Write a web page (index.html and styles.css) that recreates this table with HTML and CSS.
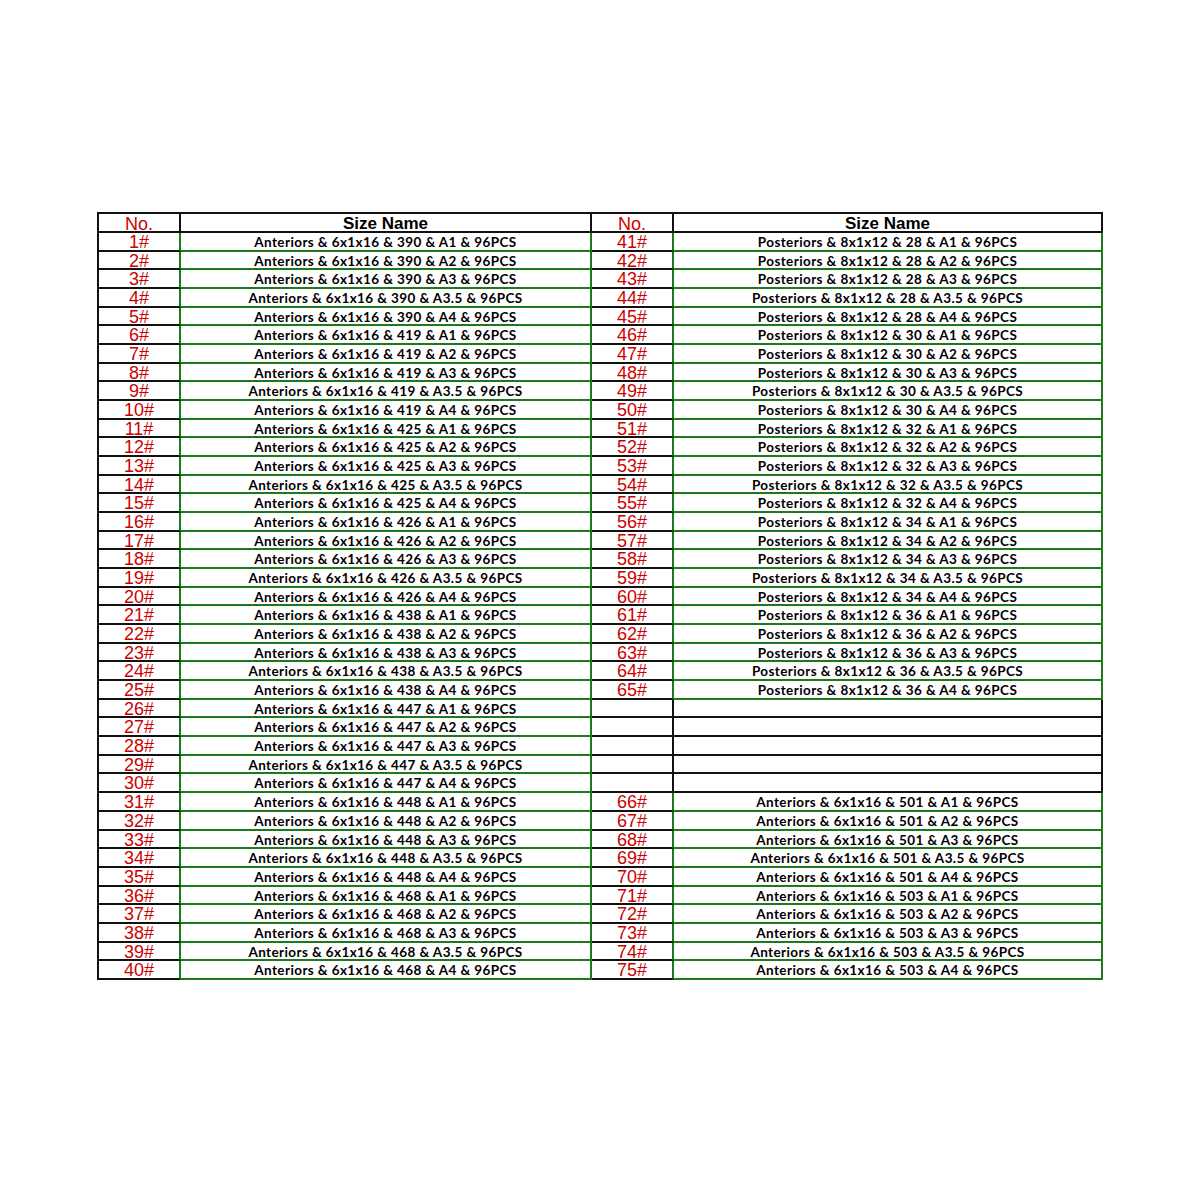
FILE: index.html
```html
<!DOCTYPE html>
<html>
<head>
<meta charset="utf-8">
<link rel="stylesheet" href="styles.css">
</head>
<body>
<div class="page">
<table class="sheet">
<colgroup><col class="c-no"><col class="c-nm1"><col class="c-no"><col class="c-nm2"></colgroup>
<thead>
<tr><th class="h-no">No.</th><th class="h-nm">Size Name</th><th class="h-no">No.</th><th class="h-nm">Size Name</th></tr>
</thead>
<tbody>
<tr><td class="no">1#</td><td class="nm">Anteriors &amp; 6x1x16 &amp; 390 &amp; A1 &amp; 96PCS</td><td class="no">41#</td><td class="nm">Posteriors &amp; 8x1x12 &amp; 28 &amp; A1 &amp; 96PCS</td></tr>
<tr><td class="no">2#</td><td class="nm">Anteriors &amp; 6x1x16 &amp; 390 &amp; A2 &amp; 96PCS</td><td class="no">42#</td><td class="nm">Posteriors &amp; 8x1x12 &amp; 28 &amp; A2 &amp; 96PCS</td></tr>
<tr><td class="no">3#</td><td class="nm">Anteriors &amp; 6x1x16 &amp; 390 &amp; A3 &amp; 96PCS</td><td class="no">43#</td><td class="nm">Posteriors &amp; 8x1x12 &amp; 28 &amp; A3 &amp; 96PCS</td></tr>
<tr><td class="no">4#</td><td class="nm">Anteriors &amp; 6x1x16 &amp; 390 &amp; A3.5 &amp; 96PCS</td><td class="no">44#</td><td class="nm">Posteriors &amp; 8x1x12 &amp; 28 &amp; A3.5 &amp; 96PCS</td></tr>
<tr><td class="no">5#</td><td class="nm">Anteriors &amp; 6x1x16 &amp; 390 &amp; A4 &amp; 96PCS</td><td class="no">45#</td><td class="nm">Posteriors &amp; 8x1x12 &amp; 28 &amp; A4 &amp; 96PCS</td></tr>
<tr><td class="no">6#</td><td class="nm">Anteriors &amp; 6x1x16 &amp; 419 &amp; A1 &amp; 96PCS</td><td class="no">46#</td><td class="nm">Posteriors &amp; 8x1x12 &amp; 30 &amp; A1 &amp; 96PCS</td></tr>
<tr><td class="no">7#</td><td class="nm">Anteriors &amp; 6x1x16 &amp; 419 &amp; A2 &amp; 96PCS</td><td class="no">47#</td><td class="nm">Posteriors &amp; 8x1x12 &amp; 30 &amp; A2 &amp; 96PCS</td></tr>
<tr><td class="no">8#</td><td class="nm">Anteriors &amp; 6x1x16 &amp; 419 &amp; A3 &amp; 96PCS</td><td class="no">48#</td><td class="nm">Posteriors &amp; 8x1x12 &amp; 30 &amp; A3 &amp; 96PCS</td></tr>
<tr><td class="no">9#</td><td class="nm">Anteriors &amp; 6x1x16 &amp; 419 &amp; A3.5 &amp; 96PCS</td><td class="no">49#</td><td class="nm">Posteriors &amp; 8x1x12 &amp; 30 &amp; A3.5 &amp; 96PCS</td></tr>
<tr><td class="no">10#</td><td class="nm">Anteriors &amp; 6x1x16 &amp; 419 &amp; A4 &amp; 96PCS</td><td class="no">50#</td><td class="nm">Posteriors &amp; 8x1x12 &amp; 30 &amp; A4 &amp; 96PCS</td></tr>
<tr><td class="no">11#</td><td class="nm">Anteriors &amp; 6x1x16 &amp; 425 &amp; A1 &amp; 96PCS</td><td class="no">51#</td><td class="nm">Posteriors &amp; 8x1x12 &amp; 32 &amp; A1 &amp; 96PCS</td></tr>
<tr><td class="no">12#</td><td class="nm">Anteriors &amp; 6x1x16 &amp; 425 &amp; A2 &amp; 96PCS</td><td class="no">52#</td><td class="nm">Posteriors &amp; 8x1x12 &amp; 32 &amp; A2 &amp; 96PCS</td></tr>
<tr><td class="no">13#</td><td class="nm">Anteriors &amp; 6x1x16 &amp; 425 &amp; A3 &amp; 96PCS</td><td class="no">53#</td><td class="nm">Posteriors &amp; 8x1x12 &amp; 32 &amp; A3 &amp; 96PCS</td></tr>
<tr><td class="no">14#</td><td class="nm">Anteriors &amp; 6x1x16 &amp; 425 &amp; A3.5 &amp; 96PCS</td><td class="no">54#</td><td class="nm">Posteriors &amp; 8x1x12 &amp; 32 &amp; A3.5 &amp; 96PCS</td></tr>
<tr><td class="no">15#</td><td class="nm">Anteriors &amp; 6x1x16 &amp; 425 &amp; A4 &amp; 96PCS</td><td class="no">55#</td><td class="nm">Posteriors &amp; 8x1x12 &amp; 32 &amp; A4 &amp; 96PCS</td></tr>
<tr><td class="no">16#</td><td class="nm">Anteriors &amp; 6x1x16 &amp; 426 &amp; A1 &amp; 96PCS</td><td class="no">56#</td><td class="nm">Posteriors &amp; 8x1x12 &amp; 34 &amp; A1 &amp; 96PCS</td></tr>
<tr><td class="no">17#</td><td class="nm">Anteriors &amp; 6x1x16 &amp; 426 &amp; A2 &amp; 96PCS</td><td class="no">57#</td><td class="nm">Posteriors &amp; 8x1x12 &amp; 34 &amp; A2 &amp; 96PCS</td></tr>
<tr><td class="no">18#</td><td class="nm">Anteriors &amp; 6x1x16 &amp; 426 &amp; A3 &amp; 96PCS</td><td class="no">58#</td><td class="nm">Posteriors &amp; 8x1x12 &amp; 34 &amp; A3 &amp; 96PCS</td></tr>
<tr><td class="no">19#</td><td class="nm">Anteriors &amp; 6x1x16 &amp; 426 &amp; A3.5 &amp; 96PCS</td><td class="no">59#</td><td class="nm">Posteriors &amp; 8x1x12 &amp; 34 &amp; A3.5 &amp; 96PCS</td></tr>
<tr><td class="no">20#</td><td class="nm">Anteriors &amp; 6x1x16 &amp; 426 &amp; A4 &amp; 96PCS</td><td class="no">60#</td><td class="nm">Posteriors &amp; 8x1x12 &amp; 34 &amp; A4 &amp; 96PCS</td></tr>
<tr><td class="no">21#</td><td class="nm">Anteriors &amp; 6x1x16 &amp; 438 &amp; A1 &amp; 96PCS</td><td class="no">61#</td><td class="nm">Posteriors &amp; 8x1x12 &amp; 36 &amp; A1 &amp; 96PCS</td></tr>
<tr><td class="no">22#</td><td class="nm">Anteriors &amp; 6x1x16 &amp; 438 &amp; A2 &amp; 96PCS</td><td class="no">62#</td><td class="nm">Posteriors &amp; 8x1x12 &amp; 36 &amp; A2 &amp; 96PCS</td></tr>
<tr><td class="no">23#</td><td class="nm">Anteriors &amp; 6x1x16 &amp; 438 &amp; A3 &amp; 96PCS</td><td class="no">63#</td><td class="nm">Posteriors &amp; 8x1x12 &amp; 36 &amp; A3 &amp; 96PCS</td></tr>
<tr><td class="no">24#</td><td class="nm">Anteriors &amp; 6x1x16 &amp; 438 &amp; A3.5 &amp; 96PCS</td><td class="no">64#</td><td class="nm">Posteriors &amp; 8x1x12 &amp; 36 &amp; A3.5 &amp; 96PCS</td></tr>
<tr><td class="no">25#</td><td class="nm">Anteriors &amp; 6x1x16 &amp; 438 &amp; A4 &amp; 96PCS</td><td class="no">65#</td><td class="nm">Posteriors &amp; 8x1x12 &amp; 36 &amp; A4 &amp; 96PCS</td></tr>
<tr><td class="no">26#</td><td class="nm">Anteriors &amp; 6x1x16 &amp; 447 &amp; A1 &amp; 96PCS</td><td class="empty"></td><td class="empty"></td></tr>
<tr><td class="no">27#</td><td class="nm">Anteriors &amp; 6x1x16 &amp; 447 &amp; A2 &amp; 96PCS</td><td class="empty"></td><td class="empty"></td></tr>
<tr><td class="no">28#</td><td class="nm">Anteriors &amp; 6x1x16 &amp; 447 &amp; A3 &amp; 96PCS</td><td class="empty"></td><td class="empty"></td></tr>
<tr><td class="no">29#</td><td class="nm">Anteriors &amp; 6x1x16 &amp; 447 &amp; A3.5 &amp; 96PCS</td><td class="empty"></td><td class="empty"></td></tr>
<tr><td class="no">30#</td><td class="nm">Anteriors &amp; 6x1x16 &amp; 447 &amp; A4 &amp; 96PCS</td><td class="empty"></td><td class="empty"></td></tr>
<tr><td class="no">31#</td><td class="nm">Anteriors &amp; 6x1x16 &amp; 448 &amp; A1 &amp; 96PCS</td><td class="no">66#</td><td class="nm">Anteriors &amp; 6x1x16 &amp; 501 &amp; A1 &amp; 96PCS</td></tr>
<tr><td class="no">32#</td><td class="nm">Anteriors &amp; 6x1x16 &amp; 448 &amp; A2 &amp; 96PCS</td><td class="no">67#</td><td class="nm">Anteriors &amp; 6x1x16 &amp; 501 &amp; A2 &amp; 96PCS</td></tr>
<tr><td class="no">33#</td><td class="nm">Anteriors &amp; 6x1x16 &amp; 448 &amp; A3 &amp; 96PCS</td><td class="no">68#</td><td class="nm">Anteriors &amp; 6x1x16 &amp; 501 &amp; A3 &amp; 96PCS</td></tr>
<tr><td class="no">34#</td><td class="nm">Anteriors &amp; 6x1x16 &amp; 448 &amp; A3.5 &amp; 96PCS</td><td class="no">69#</td><td class="nm">Anteriors &amp; 6x1x16 &amp; 501 &amp; A3.5 &amp; 96PCS</td></tr>
<tr><td class="no">35#</td><td class="nm">Anteriors &amp; 6x1x16 &amp; 448 &amp; A4 &amp; 96PCS</td><td class="no">70#</td><td class="nm">Anteriors &amp; 6x1x16 &amp; 501 &amp; A4 &amp; 96PCS</td></tr>
<tr><td class="no">36#</td><td class="nm">Anteriors &amp; 6x1x16 &amp; 468 &amp; A1 &amp; 96PCS</td><td class="no">71#</td><td class="nm">Anteriors &amp; 6x1x16 &amp; 503 &amp; A1 &amp; 96PCS</td></tr>
<tr><td class="no">37#</td><td class="nm">Anteriors &amp; 6x1x16 &amp; 468 &amp; A2 &amp; 96PCS</td><td class="no">72#</td><td class="nm">Anteriors &amp; 6x1x16 &amp; 503 &amp; A2 &amp; 96PCS</td></tr>
<tr><td class="no">38#</td><td class="nm">Anteriors &amp; 6x1x16 &amp; 468 &amp; A3 &amp; 96PCS</td><td class="no">73#</td><td class="nm">Anteriors &amp; 6x1x16 &amp; 503 &amp; A3 &amp; 96PCS</td></tr>
<tr><td class="no">39#</td><td class="nm">Anteriors &amp; 6x1x16 &amp; 468 &amp; A3.5 &amp; 96PCS</td><td class="no">74#</td><td class="nm">Anteriors &amp; 6x1x16 &amp; 503 &amp; A3.5 &amp; 96PCS</td></tr>
<tr><td class="no">40#</td><td class="nm">Anteriors &amp; 6x1x16 &amp; 468 &amp; A4 &amp; 96PCS</td><td class="no">75#</td><td class="nm">Anteriors &amp; 6x1x16 &amp; 503 &amp; A4 &amp; 96PCS</td></tr>
</tbody>
</table>
</div>
</body>
</html>
```

FILE: styles.css
```css
html, body {
  margin: 0;
  padding: 0;
  background: #ffffff;
}
.page {
  width: 1200px;
  height: 1200px;
  padding-top: 212px;
  box-sizing: border-box;
}
.sheet {
  margin: 0 auto;
  width: 1006px;
  table-layout: fixed;
  border-collapse: separate;
  border-spacing: 0;
  border-top: 2px solid #111;
  border-left: 2px solid #111;
}
.c-no { width: 82px; }
.c-nm1 { width: 411px; }
.c-nm2 { width: 429px; }
.sheet th, .sheet td {
  padding: 0;
  text-align: center;
  vertical-align: middle;
  white-space: nowrap;
  box-sizing: border-box;
}
.sheet th {
  height: 19px;
  padding-top: 3px;
  border-right: 2px solid #111;
  border-bottom: 2px solid #111;
  line-height: 14px;
}
.h-no {
  font-family: "Liberation Sans", Arial, sans-serif;
  font-weight: normal;
  font-size: 18px;
  color: #cc0000;
}
.h-nm {
  font-family: "Liberation Sans", Arial, sans-serif;
  font-weight: bold;
  font-size: 17px;
  color: #000;
}
.sheet td {
  height: 18.675px;
  line-height: 13.675px;
  padding-top: 3px;
}
.no {
  font-family: "Liberation Sans", Arial, sans-serif;
  font-size: 18px;
  color: #cc0000;
  border-bottom: 2px solid #111;
  border-right: 2px solid #1c7a1c;
}
.nm {
  font-family: Lato, "Open Sans", sans-serif;
  font-weight: bold;
  font-size: 13.5px;
  letter-spacing: 0.4px;
  color: #000;
  border-bottom: 2px solid #1c7a1c;
  border-right: 2px solid #1c7a1c;
}
.empty {
  border-bottom: 2px solid #111;
  border-right: 2px solid #111;
}
```
